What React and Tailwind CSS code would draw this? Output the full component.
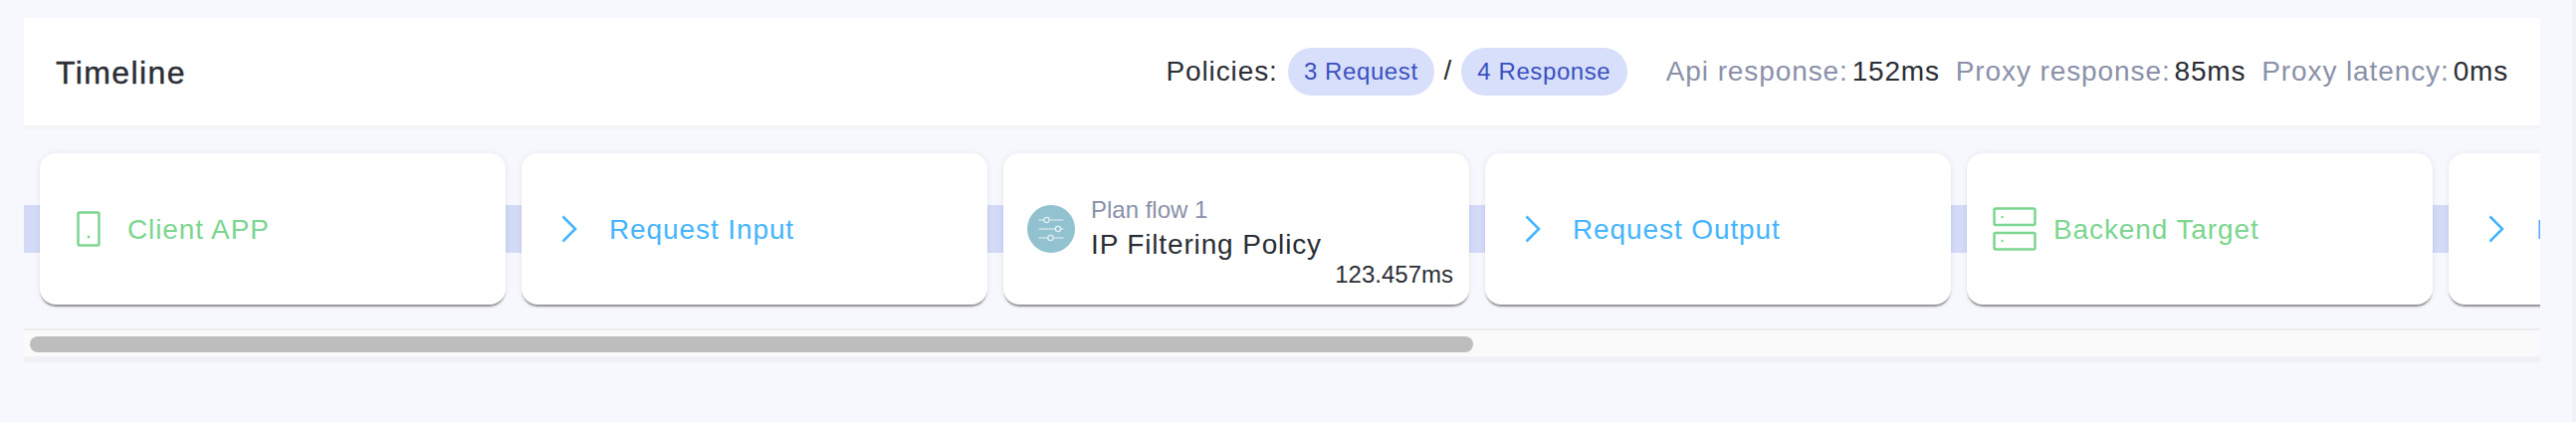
const font = { fontFamily: '"Liberation Sans", Arial, sans-serif' };

function Phone() {
  return (
    <svg width="24" height="36" viewBox="0 0 24 36" fill="none" className="shrink-0">
      <rect x="1.5" y="1.5" width="21" height="33" rx="1.5" stroke="#7bd68f" strokeWidth="2.5" />
      <circle cx="12" cy="26" r="1.4" fill="#7bd68f" />
    </svg>
  );
}

function Chevron({ className = "" }) {
  return (
    <svg width="16" height="28" viewBox="0 0 16 28" fill="none" className={`shrink-0 ${className}`}>
      <path d="M1.5 1.5 L14 14 L1.5 26.5" stroke="#45b4ff" strokeWidth="2.6" />
    </svg>
  );
}

function Server() {
  return (
    <svg width="44" height="44" viewBox="0 0 44 44" fill="none" className="shrink-0">
      <rect x="1.5" y="1.5" width="41" height="16.5" rx="1.5" stroke="#7bd68f" strokeWidth="2.5" />
      <rect x="1.5" y="26" width="41" height="16.5" rx="1.5" stroke="#7bd68f" strokeWidth="2.5" />
      <circle cx="9.5" cy="10" r="1.2" fill="#7bd68f" />
      <circle cx="9.5" cy="34" r="1.2" fill="#7bd68f" />
    </svg>
  );
}

function Sliders() {
  return (
    <div className="w-[48px] h-[48px] rounded-full bg-[#92c1cf] flex items-center justify-center shrink-0">
      <svg width="26" height="24" viewBox="0 0 26 24" fill="none" stroke="#e8f3f6" strokeWidth="1.2">
        <path d="M0.5 3H6M12 3H25.5M0.5 12H17M23 12H25.5M0.5 21H9.5M15.5 21H25.5" />
        <circle cx="8.5" cy="3" r="2.7" />
        <circle cx="20" cy="12" r="2.7" />
        <circle cx="12.5" cy="21" r="2.7" />
      </svg>
    </div>
  );
}

const cardClass =
  "relative w-[468px] h-[152px] shrink-0 bg-white rounded-[16px] flex items-center shadow-[0_3px_2px_-1px_rgba(0,0,0,0.42),0_0_6px_rgba(0,0,0,0.07)]";

function Connector() {
  return <div className="w-[16px] h-[48px] shrink-0 bg-[#d3daf8]" />;
}

function Card({ icon, label, color, gap, pad }) {
  return (
    <div className={`${cardClass} ${pad}`}>
      {icon}
      <span className={`${gap} ${color} text-[28px] tracking-[0.9px] leading-[36px] mt-[2px]`}>{label}</span>
    </div>
  );
}

function Stat({ label, value }) {
  return (
    <div className="flex items-center gap-[4px]">
      <span className="text-[#8a91a9] tracking-[0.9px]">{label}</span>
      <span className="text-[#2a2d34] tracking-[0.8px]">{value}</span>
    </div>
  );
}

export default function App() {
  return (
    <div className="w-[2588px] h-[424px] bg-[#f7f8fd] flex overflow-hidden" style={font}>
      <div className="w-[2584px] pl-[24px] pt-[18px]">
        <div className="w-[2528px]">
          <div className="h-[112px] bg-white border-b-[4px] border-[#f3f4f8] flex items-center justify-between pl-[32px] pr-[32px]">
            <span className="text-[32px] text-[#2a2d34] tracking-[1.4px] leading-[40px] [-webkit-text-stroke:0.4px_#2a2d34] mt-[1px]">Timeline</span>
            <div className="flex items-center text-[28px] leading-[36px]">
              <span className="text-[#2a2d34] tracking-[0.9px] mr-[10px]">Policies:</span>
              <span className="h-[48px] w-[147px] rounded-full bg-[#d8dffb] text-[#3a50c0] text-[24px] tracking-[0.6px] flex items-center justify-center">3 Request</span>
              <span className="w-[27px] text-center text-[#2a2d34] -mt-[2px]">/</span>
              <span className="h-[48px] w-[167px] rounded-full bg-[#d8dffb] text-[#3a50c0] text-[24px] tracking-[0.6px] flex items-center justify-center">4 Response</span>
              <div className="flex items-center gap-[16px] ml-[39px]">
                <Stat label="Api response:" value="152ms" />
                <Stat label="Proxy response:" value="85ms" />
                <Stat label="Proxy latency:" value="0ms" />
              </div>
            </div>
          </div>
          <div className="mt-[16px] py-[8px] flex items-center overflow-hidden">
            <Connector />
            <Card icon={<Phone />} label="Client APP" color="text-[#7bd68f]" gap="ml-[27px]" pad="pl-[37px]" />
            <Connector />
            <Card icon={<Chevron />} label="Request Input" color="text-[#45b4ff]" gap="ml-[32px]" pad="pl-[40px]" />
            <Connector />
            <div className={`${cardClass} pl-[24px]`}>
              <Sliders />
              <div className="ml-[16px] flex flex-col">
                <span className="text-[24px] leading-[28px] text-[#8a91a9]">Plan flow 1</span>
                <span className="text-[28px] leading-[36px] text-[#2a2d34] tracking-[0.85px] mt-[3px]">IP Filtering Policy</span>
              </div>
              <span className="absolute right-[16px] bottom-[16px] text-[24px] leading-[28px] text-[#2a2d34]">123.457ms</span>
            </div>
            <Connector />
            <Card icon={<Chevron />} label="Request Output" color="text-[#45b4ff]" gap="ml-[32px]" pad="pl-[40px]" />
            <Connector />
            <Card icon={<Server />} label="Backend Target" color="text-[#7bd68f]" gap="ml-[17px]" pad="pl-[26px]" />
            <Connector />
            <Card icon={<Chevron />} label="Response Input" color="text-[#45b4ff]" gap="ml-[32px]" pad="pl-[40px]" />
          </div>
          <div className="mt-[16px] h-[34px] bg-[#fafafa] border-t-[2px] border-b-[6px] border-t-[#ededf0] border-b-[#f1f1f5] pt-[6px] pl-[6px]">
            <div className="w-[1450px] h-[16px] rounded-full bg-[#bdbdbd]" />
          </div>
        </div>
      </div>
      <div className="w-[4px] h-full bg-[#f1f2f8]" />
    </div>
  );
}
